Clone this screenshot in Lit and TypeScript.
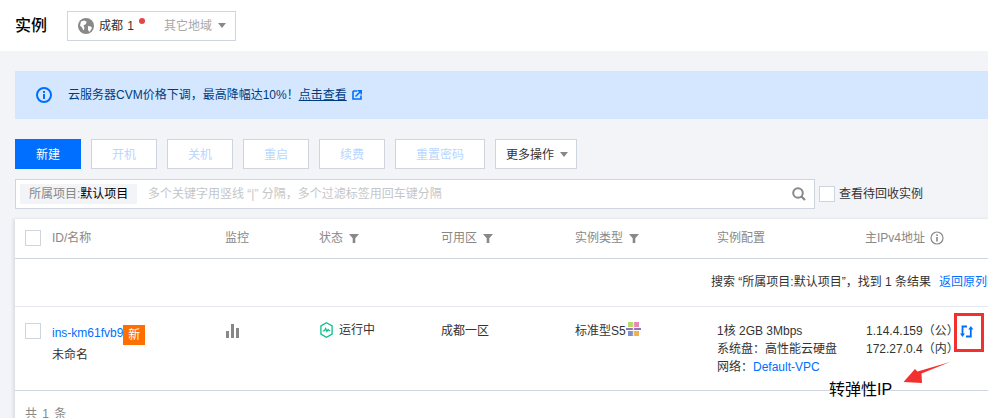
import { LitElement, html, css, svg } from "lit";
import { customElement } from "lit/decorators.js";

const caret = html`<span class="caret"></span>`;
const funnel = html`<svg class="funnel" width="12" height="12" viewBox="0 0 12 12"><path d="M1 2h10L7.300 6.200V11H4.700V6.200z" fill="#888"/></svg>`;

@customElement("app-root")
export class AppRoot extends LitElement {
  static styles = css`
    :host { display: block; width: 988px; height: 418px; overflow: hidden; position: relative; background: #f2f4f8; font: 12px/18px "Liberation Sans", "Noto Sans CJK SC", sans-serif; color: #000; }
    * { box-sizing: border-box; }
    .top { height: 51px; background: #fff; display: flex; align-items: center; padding-left: 15px; gap: 21px; }
    .title { font-size: 16px; color: #000; width: 31px; white-space: nowrap; font-weight: 500; }
    .region { width: 169px; height: 30px; border: 1px solid #cfd5de; display: flex; align-items: center; padding-left: 10px; gap: 5px; }
    .region .city { color: #333; margin-left: 0; word-spacing: 1px; }
    .dot { width: 6px; height: 6px; border-radius: 50%; background: #e54545; margin: -10px 0 0 0; }
    .region .other { color: #a8a8a8; margin-left: 14px; }
    .caret { display: inline-block; width: 0; height: 0; border-left: 4px solid transparent; border-right: 4px solid transparent; border-top: 5px solid #888; }
    .region .caret { margin-left: 1px; }
    .main { padding: 20px 0 0 15px; width: 1100px; }
    .banner { height: 48px; width: 973px; background: #d5e7ff; display: flex; align-items: center; padding-left: 21px; color: #003b80; }
    .banner svg.info { margin-right: 16px; }
    .banner a { color: #003b80; text-decoration: underline; margin-left: 0; }
    .banner svg.ext { margin-left: 5px; }
    .tools { display: flex; gap: 10px; margin-top: 20px; height: 30px; }
    .btn { height: 30px; width: 66px; border: 1px solid #cfd5de; background: #fff; display: flex; align-items: center; justify-content: center; color: #b8d6ff; padding-top: 1px; }
    .btn.primary { background: #006eff; border-color: #006eff; color: #fff; }
    .btn.wide { width: 90px; }
    .btn.more { width: 82px; color: #333; gap: 6px; padding-left: 2px; }
    .searchrow { display: flex; margin-top: 10px; height: 30px; align-items: center; }
    .search { width: 800px; height: 30px; border: 1px solid #cfd5de; background: #fff; display: flex; align-items: center; padding-left: 4px; }
    .tag { height: 20px; background: #f2f4f8; width: 117px; padding-left: 9px; display: flex; align-items: center; color: #888; white-space: nowrap; }
    .tag b { font-weight: 400; color: #000; }
    .ph { color: #c4c6c8; margin-left: 11px; flex: 1; white-space: nowrap; }
    .search svg { margin-right: 8px; }
    .recycle { display: flex; align-items: center; gap: 4px; margin-left: 4px; color: #333; }
    .cb { width: 16px; height: 16px; background: #fff; border: 1px solid #cfd5de; display: block; }
    .table { margin-top: 10px; width: 1100px; background: #fff; box-shadow: -2px 0 3px rgba(54,58,80,.12); }
    .grid { display: grid; grid-template-columns: 37px 173px 94px 122px 134px 142px 148px 1fr; }
    .head { height: 40px; align-items: center; color: #888; border-bottom: 1px solid #cfd5de; }
    .head > div { display: flex; align-items: center; gap: 5px; padding-bottom: 2px; }
    .cbcell { padding-left: 10px; }
    .notice { height: 48px; border-bottom: 1px solid #e5e8ef; padding-left: 696px; display: flex; align-items: center; color: #333; white-space: nowrap; gap: 8px; padding-bottom: 2px; }
    a { color: #006eff; text-decoration: none; }
    .row { height: 84px; border-bottom: 1px solid #cfd5de; padding-top: 14px; color: #333; }
    .row .cbcell { padding-top: 2px; }
    .idline { display: flex; align-items: flex-start; height: 22px; padding-top: 3px; }
    .new { width: 22px; height: 20px; margin-top: 1px; background: #ff6f00; color: #fff; display: flex; align-items: center; justify-content: center; }
    .name { margin-top: 3px; color: #333; }
    .mon { padding-top: 3px; padding-left: 1px; }
    .status { display: flex; gap: 6px; align-items: flex-start; padding-left: 1px; }
    .status svg { margin-top: 1px; }
    .zone { padding-top: 1px; }
    .type { display: flex; padding-top: 1px; }
    .type svg { margin-left: 0; }
    .cfg { padding-left: 0; padding-top: 1px; white-space: nowrap; }
    .ip { padding-left: 1px; padding-top: 1px; white-space: nowrap; }
    .foot { padding: 14px 0 0 10px; color: #888; word-spacing: 2px; }
    .redbox { position: absolute; left: 954px; top: 313px; width: 30px; height: 39px; border: 3px solid #f23030; }
    .swap { position: absolute; left: 960px; top: 325px; }
    .arrow { position: absolute; left: 900px; top: 358px; }
    .label { position: absolute; left: 829px; top: 379px; font-size: 16px; line-height: 22px; color: #000; white-space: nowrap; }
  `;

  render() {
    const flag = svg`<svg width="15" height="15" viewBox="0 0 15 15">
      <rect x="2" y="0" width="5" height="5" fill="#b9d86a"/><rect x="8" y="0" width="5" height="5" fill="#e88ab0"/>
      <rect x="2" y="9" width="5" height="5" fill="#7f8fd0"/><rect x="8" y="9" width="5" height="5" fill="#eeb14f"/>
      <rect x="0" y="6" width="15" height="2" fill="#8f72b8"/>
      <rect x="6.800" y="1" width="1.400" height="13" fill="#f3e7c5"/>
    </svg>`;
    return html`
      <div class="top">
        <div class="title">实例</div>
        <div class="region">
          <svg width="16" height="16" viewBox="0 0 16 16"><circle cx="8" cy="8" r="8" fill="#888"/><path d="M3 3.500l3-1 2.500 1-.5 2.500-2.500 1.500 1 2.500-1 2.500-1.500-3-2-2zM10 8l3 .5 1 1.500-2.500 4-1.500-2z" fill="#fff"/></svg>
          <span class="city">成都 1</span><span class="dot"></span>
          <span class="other">其它地域</span>${caret}
        </div>
      </div>
      <div class="main">
        <div class="banner">
          <svg class="info" width="16" height="16" viewBox="0 0 16 16"><circle cx="8" cy="8" r="7" fill="none" stroke="#006eff" stroke-width="2"/><rect x="7" y="7" width="2" height="5" fill="#006eff"/><rect x="7" y="4" width="2" height="2" fill="#006eff"/></svg>
          <span>云服务器CVM价格下调，最高降幅达10%！</span><a>点击查看</a>
          <svg class="ext" width="10" height="10" viewBox="0 0 10 10"><path d="M1 1h4M1 1v8h8V5.500" fill="none" stroke="#006eff" stroke-width="1.600"/><path d="M3.500 6.500L8.500 1.500M5.500 .8h3.700v3.700" fill="none" stroke="#006eff" stroke-width="1.500"/></svg>
        </div>
        <div class="tools">
          <div class="btn primary">新建</div>
          <div class="btn">开机</div><div class="btn">关机</div><div class="btn">重启</div><div class="btn">续费</div>
          <div class="btn wide">重置密码</div>
          <div class="btn more">更多操作${caret}</div>
        </div>
        <div class="searchrow">
          <div class="search">
            <div class="tag">所属项目:<b>默认项目</b></div>
            <div class="ph">多个关键字用竖线 “|” 分隔，多个过滤标签用回车键分隔</div>
            <svg width="14" height="14" viewBox="0 0 14 14"><circle cx="6" cy="6" r="4.800" fill="none" stroke="#888" stroke-width="2"/><path d="M9.500 9.500l3.500 3.500" stroke="#888" stroke-width="2.200"/></svg>
          </div>
          <div class="recycle"><span class="cb"></span><span>查看待回收实例</span></div>
        </div>
        <div class="table">
          <div class="grid head">
            <div class="cbcell"><span class="cb"></span></div>
            <div>ID/名称</div><div>监控</div><div>状态${funnel}</div><div>可用区${funnel}</div><div>实例类型${funnel}</div><div>实例配置</div>
            <div>主IPv4地址
              <svg width="14" height="14" viewBox="0 0 14 14"><circle cx="7" cy="7" r="6" fill="none" stroke="#888" stroke-width="1.200"/><rect x="6.200" y="6" width="1.600" height="4.500" fill="#888"/><rect x="6.200" y="3.400" width="1.600" height="1.600" fill="#888"/></svg>
            </div>
          </div>
          <div class="notice"><span>搜索 “所属项目:默认项目”，找到 1 条结果</span><a>返回原列表</a></div>
          <div class="grid row">
            <div class="cbcell"><span class="cb"></span></div>
            <div>
              <div class="idline"><a>ins-km61fvb9</a><span class="new">新</span></div>
              <div class="name">未命名</div>
            </div>
            <div class="mon"><svg width="14" height="14" viewBox="0 0 14 14"><path d="M0 7h3v7H0zM5 0h3v14H5zM10 4h3v10h-3z" fill="#888"/></svg></div>
            <div class="status">
              <svg width="13" height="16" viewBox="0 0 13 16"><path d="M6.500 .8l5.600 3.200v8l-5.600 3.200L.9 12V4z" fill="none" stroke="#0abf8b" stroke-width="1.300"/><path d="M2.800 9l1.700-.3 1.100-2.300 1.300 3 1.200-2 1.100 1.200h1" fill="none" stroke="#0abf8b" stroke-width="1.200"/></svg>
              <span>运行中</span>
            </div>
            <div class="zone">成都一区</div>
            <div class="type"><span>标准型S5</span>${flag}</div>
            <div class="cfg">1核 2GB 3Mbps<br>系统盘：高性能云硬盘<br>网络：<a>Default-VPC</a></div>
            <div class="ip">1.14.4.159（公）<br>172.27.0.4（内）</div>
          </div>
          <div class="foot">共 1 条</div>
        </div>
      </div>
      <svg class="swap" width="14" height="13" viewBox="0 0 14 13"><path d="M7 1.500H2.500V10" fill="none" stroke="#006eff" stroke-width="1.800"/><path d="M0 8.500h5L2.500 12z" fill="#006eff"/><path d="M6 11.500h4.800V3" fill="none" stroke="#006eff" stroke-width="1.800"/><path d="M8.300 4.500h5L10.800 1z" fill="#006eff"/></svg>
      <div class="redbox"></div>
      <svg class="arrow" width="54" height="28" viewBox="0 0 54 28"><path d="M50 4L21.500 15.500 22 25 3.500 24 15 11 17.500 13.500z" fill="#f23030"/></svg>
      <div class="label">转弹性IP</div>
    `;
  }
}
